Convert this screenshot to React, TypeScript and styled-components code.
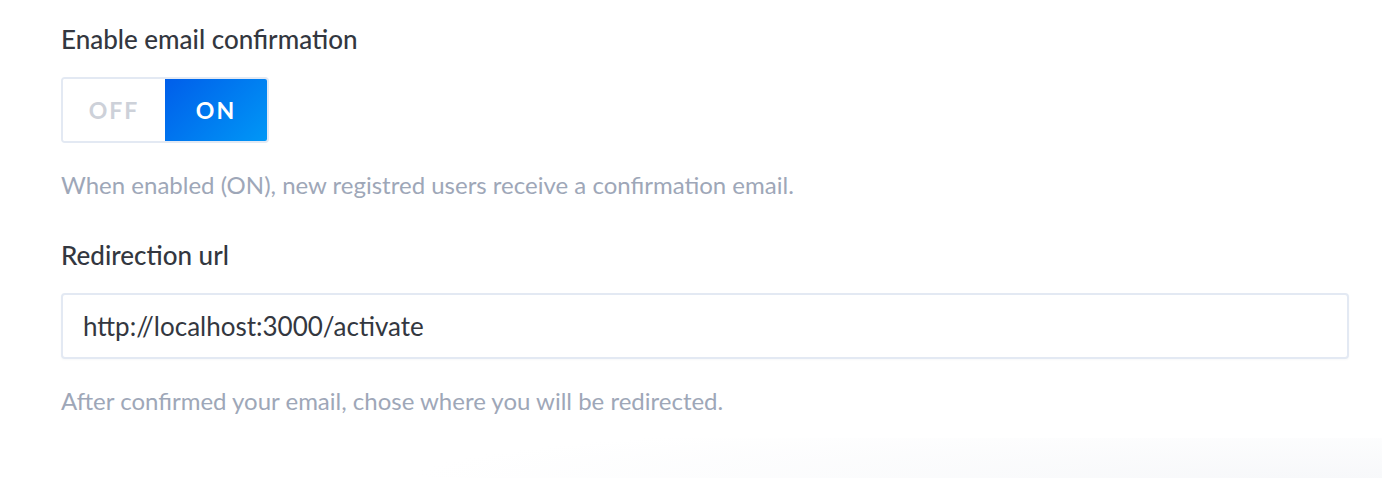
import React, { useState } from "react";
import styled, { createGlobalStyle } from "styled-components";

const GlobalStyle = createGlobalStyle`
  html, body {
    margin: 0;
    padding: 0;
    background: #ffffff;
    font-family: Lato, "Open Sans", sans-serif;
    -webkit-font-smoothing: antialiased;
  }
`;

export default function App() {
  const [enabled, setEnabled] = useState(true);
  const [url, setUrl] = useState("http://localhost:3000/activate");

  return (
    <Page>
      <GlobalStyle />
      <Form>
        <Field>
          <Label>Enable email confirmation</Label>
          <Toggle>
            <ToggleBtn type="button" active={!enabled} onClick={() => setEnabled(false)}>
              OFF
            </ToggleBtn>
            <ToggleBtn type="button" active={enabled} onClick={() => setEnabled(true)}>
              ON
            </ToggleBtn>
          </Toggle>
          <Help>When enabled (ON), new registred users receive a confirmation email.</Help>
        </Field>
        <Field>
          <Label>Redirection url</Label>
          <TextInput value={url} onChange={(e) => setUrl(e.target.value)} />
          <Help>After confirmed your email, chose where you will be redirected.</Help>
        </Field>
      </Form>
      <FooterShade />
    </Page>
  );
}

const Page = styled.div`
  width: 1382px;
  height: 478px;
  display: flex;
  flex-direction: column;
  overflow: hidden;
`;

const Form = styled.div`
  flex: 1;
  padding: 23px 33px 0 61px;
  display: flex;
  flex-direction: column;
  gap: 40px;
`;

const Field = styled.div`
  display: flex;
  flex-direction: column;
`;

const Label = styled.label`
  font-size: 26px;
  font-weight: 500;
  color: #333740;
  line-height: 32px;
  margin-bottom: 22px;
`;

const Toggle = styled.div`
  display: flex;
  width: 208px;
  height: 66px;
  box-sizing: border-box;
  border: 2px solid #e3e9f3;
  border-radius: 4px;
  overflow: hidden;
`;

const ToggleBtn = styled.button<{ active: boolean }>`
  flex: 1;
  border: 0;
  margin: 0;
  padding: 0;
  font-family: Lato, sans-serif;
  font-size: 23px;
  font-weight: 700;
  letter-spacing: 2px;
  cursor: pointer;
  color: ${(p) => (p.active ? "#ffffff" : "#cdd1d9")};
  background: ${(p) =>
    p.active ? "linear-gradient(315deg, #0097f6 0%, #005eea 100%)" : "#ffffff"};
`;

const Help = styled.p`
  margin: 28px 0 0;
  font-size: 24px;
  color: #9ea7b8;
  line-height: 28px;
`;

const TextInput = styled.input`
  width: 100%;
  height: 66px;
  box-sizing: border-box;
  border: 2px solid #e3e9f3;
  border-radius: 4px;
  padding: 0 20px;
  font-family: Lato, sans-serif;
  font-size: 26px;
  color: #333740;
  outline: none;
  box-shadow: 0 1px 2px rgba(104, 118, 142, 0.05);
`;

const FooterShade = styled.div`
  height: 40px;
  background: radial-gradient(ellipse 900px 60px at 95% 100%, #f7f8fa 0%, #ffffff 100%);
`;
